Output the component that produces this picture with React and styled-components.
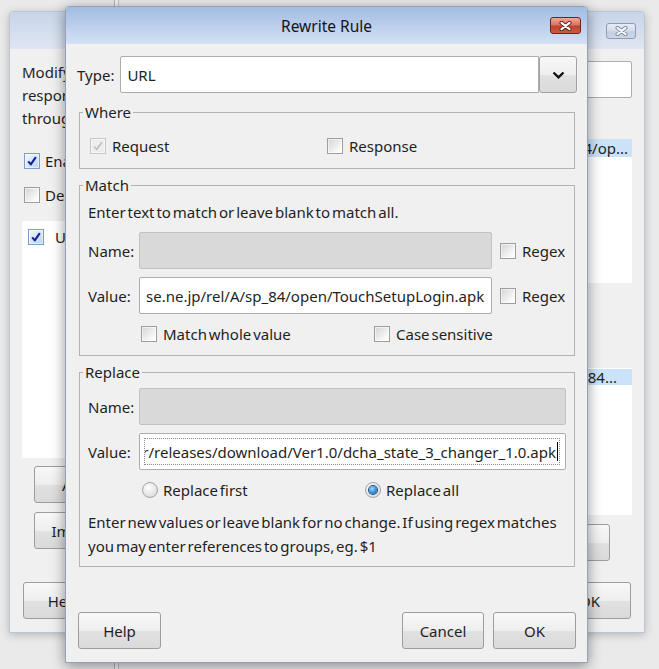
import React from "react";
import styled, { createGlobalStyle } from "styled-components";

const GlobalStyle = createGlobalStyle`
  html, body {
    margin: 0;
    padding: 0;
  }
  body {
    background: #eaeaea;
    font-family: "Noto Sans", "DejaVu Sans", sans-serif;
    font-size: 15px;
    word-spacing: -2px;
    color: #1f1f1f;
  }
`;

const Desktop = styled.div`
  position: relative;
  width: 659px;
  height: 669px;
  overflow: hidden;
  background: #eaeaea;
`;

// edge of some other window far behind
const BackEdge = styled.div`
  position: absolute;
  left: 114px;
  top: 0;
  bottom: 0;
  width: 3px;
  border-left: 1px solid #b4b4b4;
  border-right: 1px solid #c6c6c6;
  background: #f3f3f3;
`;

const Window = styled.div`
  position: absolute;
  left: ${(p) => p.$x}px;
  top: ${(p) => p.$y}px;
  width: ${(p) => p.$w}px;
  height: ${(p) => p.$h}px;
  box-sizing: border-box;
  display: flex;
  flex-direction: column;
  background: #f0f0f0;
  border: 1px solid ${(p) => (p.$active ? "#93a2b8" : "#bcc5d2")};
  border-radius: 4px 4px 0 0;
  box-shadow: ${(p) =>
    p.$active
      ? "0 3px 14px rgba(0, 0, 0, 0.42)"
      : "0 2px 10px rgba(0, 0, 0, 0.22)"};
`;

const TitleBar = styled.div`
  flex: none;
  height: 37px;
  display: grid;
  grid-template-columns: 1fr auto 1fr;
  align-items: center;
  padding: 0 ${(p) => (p.$active ? 6 : 8)}px;
  border-radius: 3px 3px 0 0;
  background: ${(p) =>
    p.$active
      ? "linear-gradient(#a3bce2, #d3e1f5)"
      : "linear-gradient(#c8d4ea, #dfe6f2)"};
`;

const TitleText = styled.div`
  font-size: 15.5px;
  word-spacing: 0;
  color: #141414;
`;

const CloseButton = styled.div`
  justify-self: end;
  width: ${(p) => (p.$inactive ? 30 : 31)}px;
  height: ${(p) => (p.$inactive ? 16 : 17)}px;
  box-sizing: border-box;
  display: flex;
  align-items: center;
  justify-content: center;
  border: 1px solid ${(p) => (p.$inactive ? "#8f9cb1" : "#6e2419")};
  border-radius: 3px;
  background: ${(p) =>
    p.$inactive
      ? "linear-gradient(#e6ecf5, #d3dcec 50%, #c4cfe3 55%, #cbd5e7)"
      : "linear-gradient(#eba999, #d97663 45%, #c2432c 55%, #cc5a41)"};
`;

const CloseGlyph = ({ inactive }) => (
  <svg width="13" height="10" viewBox="0 0 13 10">
    <g strokeLinecap="round">
      <path d="M2.5 1.8 L10.5 8.2 M10.5 1.8 L2.5 8.2" stroke={inactive ? "#7c879b" : "#4d201a"} strokeWidth="4" />
      <path d="M2.5 1.8 L10.5 8.2 M10.5 1.8 L2.5 8.2" stroke={inactive ? "#f5f7fb" : "#ffffff"} strokeWidth="2.2" />
    </g>
  </svg>
);

/* ---------- shared controls ---------- */

const Box = styled.span`
  flex: none;
  width: 16px;
  height: 16px;
  box-sizing: border-box;
  display: inline-flex;
  align-items: center;
  justify-content: center;
  border: 1px solid
    ${(p) => (p.$disabled ? "#c7c7c7" : p.$checked ? "#7f9cc6" : "#9e9e9e")};
  background: ${(p) =>
    p.$disabled
      ? "#ededed"
      : p.$checked
      ? "linear-gradient(135deg, #f3f8fe, #bad2ee)"
      : "linear-gradient(135deg, #d3d3d3, #fbfbfb 80%)"};
  box-shadow: inset 0 0 0 1px rgba(255, 255, 255, 0.55);
`;

const Checkbox = ({ checked, disabled }) => (
  <Box $checked={checked} $disabled={disabled}>
    {checked && (
      <svg width="12" height="12" viewBox="0 0 12 12">
        <path
          d="M2.2 6.4 L4.8 9.4 L9.8 2.2"
          fill="none"
          stroke={disabled ? "#bdbdbd" : "#15238f"}
          strokeWidth={disabled ? 1.6 : 2.1}
          strokeLinejoin="round"
        />
      </svg>
    )}
  </Box>
);

const Radio = styled.span`
  flex: none;
  width: 16px;
  height: 16px;
  box-sizing: border-box;
  border-radius: 50%;
  border: 1px solid #a4a4a4;
  background: radial-gradient(circle at 40% 35%, #ffffff, #d2d2d2);
  display: inline-flex;
  align-items: center;
  justify-content: center;

  &::after {
    content: "";
    display: ${(p) => (p.$checked ? "block" : "none")};
    width: 8px;
    height: 8px;
    border-radius: 50%;
    background: radial-gradient(circle at 40% 35%, #9bdcff, #2a86cf 60%, #175a9c);
    box-shadow: 0 0 0 1px #1f4c7e;
  }
`;

const Option = styled.label`
  display: inline-flex;
  align-items: center;
  gap: ${(p) => (p.$radio ? 5 : 6)}px;
  height: 24px;
  white-space: nowrap;
`;

const Button = styled.div`
  flex: none;
  width: ${(p) => p.$w || 83}px;
  height: ${(p) => p.$h || 37}px;
  box-sizing: border-box;
  display: flex;
  align-items: center;
  justify-content: center;
  border: 1px solid #9d9d9d;
  border-radius: 3px;
  background: linear-gradient(#f8f8f8, #eeeeee 50%, #e1e1e1 52%, #dadada);
  color: #1f1f1f;
  white-space: nowrap;
  overflow: hidden;
`;

const Field = styled.div`
  height: 37px;
  min-width: 0;
  box-sizing: border-box;
  display: flex;
  align-items: center;
  padding: ${(p) => (p.$focus ? "4px 5px 4px 4px" : "0 6px")};
  border: 1px solid ${(p) => (p.$disabled ? "#c2c2c2" : "#adadad")};
  border-radius: 2px;
  background: ${(p) => (p.$disabled ? "#d9d9d9" : "#ffffff")};
  white-space: nowrap;
  overflow: hidden;
`;

const FocusRing = styled.div`
  flex: 1;
  align-self: stretch;
  min-width: 0;
  display: flex;
  align-items: center;
  justify-content: flex-end;
  padding-right: 1px;
  border: 1px dotted #8d8d8d;
  overflow: hidden;

  span {
    flex: none;
  }
`;

const Caret = styled.i`
  flex: none;
  width: 1px;
  height: 19px;
  margin-left: 1px;
  background: #000;
`;

/* ---------- rewrite rule dialog ---------- */

const DialogBody = styled.div`
  flex: 1;
  display: flex;
  flex-direction: column;
  padding: 12px 10px 13px 11px;
`;

const TypeRow = styled.div`
  display: flex;
  align-items: center;
  gap: 6px;
  height: 37px;
`;

const Combo = styled.div`
  flex: 1;
  display: flex;
  height: 37px;
`;

const ComboField = styled(Field)`
  flex: 1;
  border-radius: 2px 0 0 2px;
`;

const ComboButton = styled(Button)`
  width: 38px;
  border-color: #a2a2a2;
`;

const Group = styled.fieldset`
  margin: ${(p) => p.$mt}px 2px 0;
  padding: 0;
  min-width: 0;
  border: 1px solid #b3b3b3;
`;

const Legend = styled.legend`
  margin-left: 3px;
  padding: 0 2px;
  font-size: 15px;
  line-height: 18px;
`;

const WhereGrid = styled.div`
  display: grid;
  grid-template-columns: 237px auto;
  padding: 13px 10px 10px;
`;

const FormGrid = styled.div`
  display: grid;
  grid-template-columns: ${(p) => p.$cols};
  column-gap: 8px;
  row-gap: 8px;
  align-items: center;
  padding: ${(p) => p.$pad};
`;

const Hint = styled.div`
  grid-column: 1 / -1;
  line-height: 24px;
  white-space: nowrap;
`;

const FieldLabel = styled.div`
  white-space: nowrap;
`;

const OptionRow = styled.div`
  grid-column: 2;
  display: grid;
  grid-template-columns: ${(p) => p.$first}px auto;
  padding-left: ${(p) => p.$indent}px;
`;

const Footer = styled.div`
  margin-top: auto;
  display: flex;
  align-items: center;
  gap: 9px;
  padding: 0 1px;
`;

const Spacer = styled.div`
  flex: 1;
`;

/* ---------- rewrite settings window (behind) ---------- */

const BackBody = styled.div`
  flex: 1;
  display: flex;
  flex-direction: column;
  padding: 12px 12px 13px;
`;

const BackColumns = styled.div`
  display: flex;
  justify-content: space-between;
`;

const LeftCol = styled.div`
  width: 280px;
  display: flex;
  flex-direction: column;
`;

const RightCol = styled.div`
  width: 300px;
  display: flex;
  flex-direction: column;
  align-items: flex-end;
`;

const Description = styled.div`
  line-height: 23px;
  white-space: nowrap;
`;

const CheckLine = styled(Option)`
  margin-top: ${(p) => p.$mt}px;
  padding-left: 2px;
  gap: 5px;
`;

const ListBox = styled.div`
  align-self: stretch;
  margin-top: ${(p) => p.$mt}px;
  height: ${(p) => p.$h}px;
  background: #ffffff;
  overflow: hidden;
`;

const RuleItem = styled.div`
  display: flex;
  align-items: center;
  gap: 11px;
  padding: 6px 6px;
  white-space: nowrap;
`;

const ListItem = styled.div`
  height: ${(p) => p.$h}px;
  margin-top: ${(p) => p.$mt || 0}px;
  display: flex;
  align-items: center;
  justify-content: flex-end;
  padding-right: ${(p) => p.$pr}px;
  background: ${(p) => (p.$selected ? "#cbe3f9" : "transparent")};
  white-space: nowrap;
  overflow: hidden;

  span {
    flex: none;
  }
`;

const WideField = styled(Field)`
  align-self: stretch;
`;

const SideButton = styled(Button)`
  margin-top: ${(p) => p.$mt}px;
  margin-right: ${(p) => p.$mr || 0}px;
  margin-left: ${(p) => p.$ml || 0}px;
  align-self: ${(p) => p.$self || "auto"};
`;

export default function App() {
  return (
    <>
      <GlobalStyle />
      <Desktop>
        <BackEdge />

        <Window $x={9} $y={11} $w={636} $h={622}>
          <TitleBar>
            <span />
            <TitleText>Rewrite Settings</TitleText>
            <CloseButton $inactive>
              <CloseGlyph inactive />
            </CloseButton>
          </TitleBar>
          <BackBody>
            <BackColumns>
              <LeftCol>
                <Description>
                  Modify requests and
                  <br />
                  responses as they pass
                  <br />
                  through Charles.
                </Description>
                <CheckLine $mt={19}>
                  <Checkbox checked />
                  Enable Rewrite
                </CheckLine>
                <CheckLine $mt={10}>
                  <Checkbox />
                  Debug in Error Log
                </CheckLine>
                <ListBox $mt={14} $h={237}>
                  <RuleItem>
                    <Checkbox checked />
                    Untitled Set
                  </RuleItem>
                </ListBox>
                <SideButton $mt={8} $ml={12} $w={84}>
                  Add
                </SideButton>
                <SideButton $mt={9} $ml={12} $w={84}>
                  Import
                </SideButton>
              </LeftCol>
              <RightCol>
                <WideField>Untitled Set</WideField>
                <SideButton $mt={8} $mr={2} $h={30} $self="stretch">
                  Add
                </SideButton>
                <ListBox $mt={3} $h={144}>
                  <ListItem $selected $h={18} $pr={4}>
                    <span>townsystem.benesse.ne.jp/rel/A/sp_84/op...</span>
                  </ListItem>
                </ListBox>
                <SideButton $mt={55} $mr={2} $h={29} $self="stretch">
                  Add
                </SideButton>
                <ListBox $mt={1} $h={147}>
                  <ListItem $selected $h={16} $mt={1} $pr={15}>
                    <span>URL se.ne.jp/rel/A/sp_84...</span>
                  </ListItem>
                </ListBox>
                <SideButton $mt={9} $mr={22}>
                  Edit
                </SideButton>
              </RightCol>
            </BackColumns>
            <Footer>
              <Button $w={82}>Help</Button>
              <Spacer />
              <Button>OK</Button>
            </Footer>
          </BackBody>
        </Window>

        <Window $x={65} $y={6} $w={523} $h={657} $active>
          <TitleBar $active>
            <span />
            <TitleText>Rewrite Rule</TitleText>
            <CloseButton>
              <CloseGlyph />
            </CloseButton>
          </TitleBar>
          <DialogBody>
            <TypeRow>
              <FieldLabel>Type:</FieldLabel>
              <Combo>
                <ComboField>URL</ComboField>
                <ComboButton>
                  <svg width="13" height="8" viewBox="0 0 13 8">
                    <path
                      d="M1.5 1.5 L6.5 6.3 L11.5 1.5"
                      fill="none"
                      stroke="#111"
                      strokeWidth="2.4"
                    />
                  </svg>
                </ComboButton>
              </Combo>
            </TypeRow>

            <Group $mt={10}>
              <Legend>Where</Legend>
              <WhereGrid>
                <Option>
                  <Checkbox checked disabled />
                  Request
                </Option>
                <Option>
                  <Checkbox />
                  Response
                </Option>
              </WhereGrid>
            </Group>

            <Group $mt={7}>
              <Legend>Match</Legend>
              <FormGrid $cols="43px 353px auto" $pad="6px 10px 9px 8px">
                <Hint>Enter text to match or leave blank to match all.</Hint>
                <FieldLabel>Name:</FieldLabel>
                <Field $disabled />
                <Option>
                  <Checkbox />
                  Regex
                </Option>
                <FieldLabel>Value:</FieldLabel>
                <Field>se.ne.jp/rel/A/sp_84/open/TouchSetupLogin.apk</Field>
                <Option>
                  <Checkbox />
                  Regex
                </Option>
                <OptionRow $first={233} $indent={2}>
                  <Option>
                    <Checkbox />
                    Match whole value
                  </Option>
                  <Option>
                    <Checkbox />
                    Case sensitive
                  </Option>
                </OptionRow>
              </FormGrid>
            </Group>

            <Group $mt={7}>
              <Legend>Replace</Legend>
              <FormGrid $cols="43px 1fr" $pad="7px 8px 8px 8px">
                <FieldLabel>Name:</FieldLabel>
                <Field $disabled />
                <FieldLabel>Value:</FieldLabel>
                <Field $focus>
                  <FocusRing>
                    <span>
                      https://github.com/tomorrowkey/dcha_state_3_changer/releases/download/Ver1.0/dcha_state_3_changer_1.0.apk
                    </span>
                    <Caret />
                  </FocusRing>
                </Field>
                <OptionRow $first={223} $indent={3}>
                  <Option $radio>
                    <Radio />
                    Replace first
                  </Option>
                  <Option $radio>
                    <Radio $checked />
                    Replace all
                  </Option>
                </OptionRow>
                <Hint>
                  Enter new values or leave blank for no change. If using regex matches
                  <br />
                  you may enter references to groups, eg. $1
                </Hint>
              </FormGrid>
            </Group>

            <Footer>
              <Button>Help</Button>
              <Spacer />
              <Button $w={82}>Cancel</Button>
              <Button>OK</Button>
            </Footer>
          </DialogBody>
        </Window>
      </Desktop>
    </>
  );
}
